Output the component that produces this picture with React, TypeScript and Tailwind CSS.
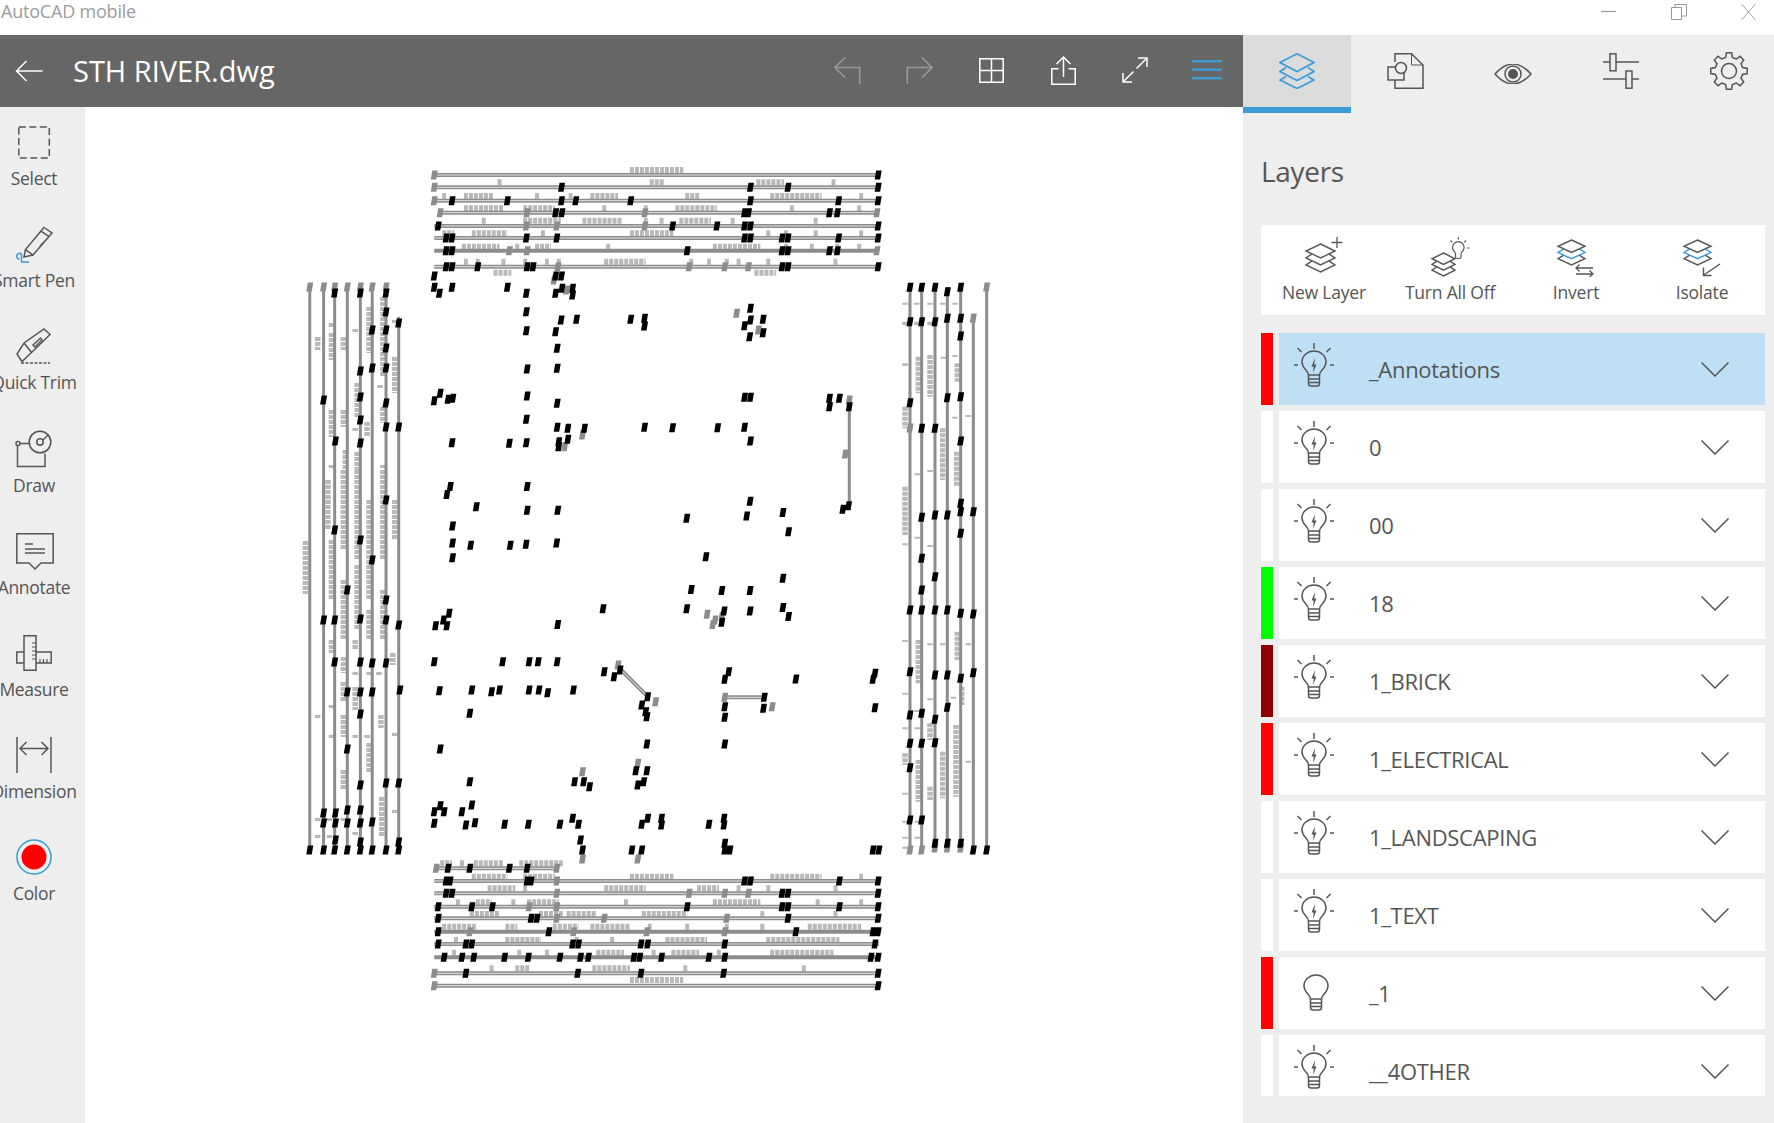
import type { ReactNode } from "react";

const INK = "#555555";
const BLUE = "#3a9bd5";

type Pt = [number, number];
type Seg = [number, number, number];

// --- drawing data, read off the plan in zoomed pixels ---
const zx = (px: number) => 290 + px / 2.53;
const ry = (x: number) => 880 + x / 3;

const topLines = [75, 112, 152, 188, 228, 264, 302, 350];
const bottomLines = [723, 760, 800, 835, 875, 912, 952, 1000, 1037];

const topBlack: Pt[] = [
  [1488, 75], [687, 112], [1165, 112], [1260, 112], [1488, 112],
  [410, 152], [550, 152], [687, 152], [723, 152], [862, 152], [1165, 152], [1388, 152], [1488, 152],
  [672, 188], [688, 188], [1150, 188], [1160, 188], [1365, 188], [1385, 188],
  [375, 228], [968, 228], [1080, 228], [1150, 228], [1165, 228], [1488, 228],
  [395, 264], [410, 264], [598, 264], [675, 264], [1150, 264], [1165, 264], [1245, 264], [1260, 264], [1388, 264], [1488, 264],
  [395, 302], [410, 302], [1005, 302], [1245, 302], [1260, 302], [1365, 302], [1385, 302],
  [395, 350], [410, 350], [475, 350], [600, 350], [615, 350], [1245, 350], [1260, 350], [1488, 350],
  [365, 378], [687, 378], [672, 378], [365, 412], [378, 430], [410, 412], [550, 412], [598, 430], [672, 430], [688, 415], [715, 415], [715, 435],
  [598, 485], [598, 542], [686, 510], [672, 545], [725, 508], [862, 508], [897, 505], [897, 528], [1165, 475], [1165, 510], [1150, 527], [1197, 508], [1197, 548], [1163, 560],
  [676, 595], [600, 657], [676, 655], [380, 730], [365, 752], [400, 748], [412, 745], [600, 738], [676, 760], [1150, 742], [1165, 742], [1365, 745], [1390, 745], [1365, 770], [1415, 770],
  [598, 808], [676, 832], [703, 835], [745, 835], [897, 832], [968, 833], [1082, 833], [1150, 832], [410, 878], [555, 880], [598, 878], [680, 875], [703, 868], [680, 890], [1165, 873],
];
const topGray: Pt[] = [
  [365, 75], [365, 112], [365, 152], [380, 188], [600, 188], [898, 188], [1485, 188],
  [598, 228], [675, 228], [898, 228], [555, 302], [600, 302], [1485, 302], [678, 350], [1010, 350], [1100, 350], [1160, 350],
  [668, 390], [700, 420], [1130, 490], [1185, 540], [1415, 750], [740, 855], [695, 890], [1405, 912],
];
const topText: Seg[] = [
  [860, 995, 60], [525, 535, 97], [910, 948, 97], [1180, 1250, 97], [1370, 1380, 97],
  [385, 395, 138], [440, 515, 138], [620, 630, 138], [705, 715, 138], [760, 830, 138], [1000, 1035, 138], [1215, 1345, 138], [1440, 1450, 138],
  [440, 540, 175], [590, 670, 175], [790, 800, 175], [895, 905, 175], [975, 1080, 175], [1265, 1275, 175], [1435, 1445, 175],
  [485, 495, 212], [590, 685, 212], [740, 840, 212], [895, 905, 212], [935, 945, 212], [985, 1065, 212], [1115, 1125, 212], [1325, 1335, 212],
  [385, 415, 250], [460, 550, 250], [635, 645, 250], [860, 970, 250], [1205, 1215, 250], [1250, 1260, 250], [1325, 1335, 250], [1440, 1450, 250],
  [435, 530, 290], [570, 580, 290], [620, 660, 290], [800, 810, 290], [1070, 1190, 290], [1250, 1260, 290], [1315, 1325, 290], [1380, 1390, 290], [1435, 1445, 290],
  [440, 450, 335], [470, 480, 335], [535, 545, 335], [590, 600, 335], [645, 655, 335], [675, 685, 335], [795, 900, 335], [1010, 1020, 335], [1055, 1065, 335], [1100, 1110, 335], [1130, 1140, 335], [1205, 1215, 335], [1375, 1385, 335],
  [515, 560, 368], [1175, 1230, 368],
];

const botBlack: Pt[] = [
  [400, 685], [455, 685], [555, 685], [600, 685],
  [395, 723], [405, 723], [600, 723], [610, 723], [1150, 723], [1165, 723], [1390, 723], [1488, 723],
  [395, 760], [410, 760], [1245, 760], [1260, 760], [1488, 760],
  [375, 800], [460, 800], [512, 800], [1005, 800], [1245, 800], [1260, 800], [1390, 800], [1488, 800],
  [375, 835], [610, 835], [625, 835], [1260, 835], [1488, 835],
  [375, 875], [655, 875], [1280, 875], [1475, 875], [1488, 875],
  [375, 912], [445, 912], [460, 912], [715, 912], [730, 912], [888, 912], [905, 912], [1100, 912], [1480, 912],
  [390, 952], [435, 952], [465, 952], [543, 952], [603, 952], [683, 952], [735, 952], [755, 952], [870, 952], [885, 952], [940, 952], [1060, 952], [1100, 952], [1470, 952], [1488, 952],
  [445, 1000], [728, 1000], [888, 1000], [1097, 1000], [1488, 1000], [1488, 1037],
  [365, 65], [538, 65], [605, 65], [628, 65], [676, 65], [795, 95], [820, 110], [835, 90], [378, 152], [460, 150], [510, 155], [530, 150], [605, 150], [630, 150], [652, 158], [717, 150],
  [905, 170], [890, 195], [900, 215], [903, 230], [1110, 95], [1100, 118], [1280, 117], [1480, 100], [1475, 118], [1200, 172], [1198, 205], [1100, 200], [1100, 232], [1480, 203],
  [455, 220], [380, 327], [903, 312], [1100, 312], [455, 425], [720, 425], [743, 425], [758, 440], [875, 392], [903, 392], [880, 435], [895, 425],
  [365, 515], [380, 497], [390, 515], [435, 515], [460, 495], [365, 550], [445, 555], [468, 548], [543, 553], [603, 553], [683, 553], [715, 535], [730, 553], [890, 553], [905, 535], [940, 535], [940, 555], [1060, 553], [1098, 535], [1098, 555],
  [1100, 610], [1100, 630], [1113, 630], [1475, 630], [1490, 630], [735, 600], [740, 630], [865, 630], [890, 630],
];
const botGray: Pt[] = [
  [370, 685], [675, 685], [675, 723], [675, 760], [1010, 760], [1100, 760], [1160, 760], [605, 800], [675, 800], [675, 835], [795, 835], [1105, 835],
  [455, 875], [718, 875], [903, 875], [1100, 875], [365, 1000], [365, 1037],
  [740, 657], [880, 657], [830, 75], [925, 185], [1220, 200], [1100, 172], [880, 370], [740, 395],
];
const botText: Seg[] = [
  [380, 410, 670], [430, 440, 670], [465, 540, 670], [580, 690, 670],
  [460, 550, 710], [590, 670, 710], [860, 970, 710], [1215, 1345, 710], [1440, 1450, 710],
  [500, 570, 745], [590, 600, 745], [795, 900, 745], [1030, 1085, 745], [1130, 1140, 745], [1205, 1215, 745], [1375, 1385, 745],
  [420, 430, 787], [470, 510, 787], [560, 570, 787], [600, 680, 787], [845, 855, 787], [1070, 1190, 787], [1330, 1340, 787], [1440, 1450, 787],
  [455, 530, 822], [630, 690, 822], [700, 775, 822], [890, 1005, 822], [1190, 1200, 822], [1375, 1385, 822],
  [385, 470, 860], [545, 575, 860], [665, 730, 860], [760, 860, 860], [905, 915, 860], [1000, 1010, 860], [1100, 1110, 860], [1190, 1200, 860], [1310, 1445, 860],
  [415, 425, 900], [545, 635, 900], [720, 730, 900], [810, 820, 900], [950, 1055, 900], [1205, 1390, 900],
  [410, 420, 938], [575, 585, 938], [645, 655, 938], [775, 845, 938], [915, 925, 938], [965, 1035, 938], [1080, 1090, 938], [1215, 1375, 938],
  [505, 515, 985], [570, 605, 985], [765, 860, 985], [995, 1005, 985], [1295, 1305, 985], [860, 995, 1020],
];

// middle of the plan, read off the full screenshot (displayed px)
const midBlack: Pt[] = [
  [398, 430], [395, 437], [466, 430], [421, 448], [466, 451], [400, 465], [400, 480], [416, 482], [400, 493], [451, 482], [465, 481], [492, 480], [493, 451],
  [607, 458], [663, 443], [660, 456], [692, 453], [697, 470], [745, 450], [750, 447], [624, 492], [692, 511], [611, 521], [638, 522], [663, 522],
  [607, 538], [640, 540], [663, 540], [692, 537], [697, 545], [533, 538], [397, 542], [392, 548], [385, 553], [395, 553], [493, 552], [638, 550],
];
const midGray: Pt[] = [[625, 543], [632, 548], [638, 545], [630, 552]];
const disp = (n: number) => n * 1.1314;

const leftLines = [50, 85, 113, 145, 178, 208, 243, 275];
// left block: y in real pixels
const leftBlack: Pt[] = [
  [113, 293], [178, 293], [243, 293], [243, 312], [208, 330], [275, 323], [243, 330], [243, 348], [178, 371], [208, 368], [243, 368],
  [85, 400], [178, 397], [243, 403], [178, 420], [243, 427], [275, 427], [115, 441], [178, 443],
  [85, 620], [113, 620], [178, 619], [243, 600], [243, 620], [275, 625], [113, 530], [178, 540], [243, 500], [208, 560], [145, 590],
  [113, 662], [178, 662], [208, 663], [243, 663], [145, 692], [178, 692], [208, 692], [278, 690], [178, 714], [145, 749], [178, 785], [243, 783], [275, 783],
  [85, 813], [115, 813], [145, 810], [178, 810], [85, 823], [115, 823], [145, 823], [178, 823], [208, 822], [115, 840], [178, 842], [275, 842],
  [50, 850], [85, 850], [113, 850], [145, 850], [178, 850], [208, 850], [243, 850], [275, 850],
];
const leftText: Seg[] = [
  [70, 337, 350], [105, 323, 328], [105, 333, 360], [135, 337, 350], [165, 329, 332], [200, 307, 353], [235, 297, 377], [265, 320, 323], [265, 357, 393], [228, 385, 388],
  [105, 410, 437], [135, 410, 427], [170, 383, 417], [195, 422, 437], [235, 407, 423], [165, 428, 431], [235, 465, 468], [105, 465, 468], [140, 450, 470], [170, 452, 470],
  [39, 541, 594], [96, 480, 530], [105, 540, 600], [135, 470, 550], [170, 470, 560], [170, 565, 630], [200, 500, 600], [235, 470, 560], [265, 500, 540], [135, 580, 640], [235, 590, 640], [200, 610, 640],
  [105, 640, 653], [135, 657, 673], [165, 640, 650], [260, 653, 665], [165, 672, 675], [200, 672, 675], [225, 672, 675], [135, 682, 702], [165, 687, 710], [70, 715, 718],
  [105, 705, 708], [135, 715, 737], [230, 715, 728], [105, 735, 738], [165, 735, 738], [195, 735, 738], [265, 733, 736], [200, 743, 773], [135, 770, 790], [232, 797, 837],
  [70, 818, 821], [100, 818, 821], [135, 818, 821], [265, 810, 813], [70, 835, 838], [100, 835, 838], [165, 832, 835],
];

const rightLines = [90, 125, 165, 202, 242, 280, 320];
const r9 = (y: number) => 260 + y / 3;
const r10 = (y: number) => 610 + y / 3;
const rightBlack: Pt[] = [
  ...([[90, 82], [125, 82], [165, 82], [202, 95], [242, 82], [90, 185], [125, 185], [165, 185], [202, 175], [242, 175], [242, 228], [202, 413], [242, 410], [90, 428], [125, 505], [165, 505], [242, 543], [125, 772], [165, 765], [202, 765], [242, 730], [242, 755], [280, 755], [242, 820], [125, 895], [165, 950], [125, 990], [90, 1050], [125, 1050], [165, 1050], [202, 1050]] as Pt[]).map(([x, y]): Pt => [x, r9(y)]),
  ...([[242, 10], [280, 12], [90, 185], [280, 188], [165, 195], [202, 195], [242, 205], [202, 292], [90, 315], [125, 310], [165, 328], [90, 400], [125, 400], [165, 398], [90, 473], [90, 630], [125, 630], [165, 700], [202, 700], [242, 700], [280, 720], [320, 720]] as Pt[]).map(([x, y]): Pt => [x, r10(y)]),
];
const rightGray: Pt[] = [[320, 287], [280, 318], [90, 428], [90, 850], [125, 850], [165, 848], [202, 848], [242, 848]];
const rightText: Seg[] = [
  ...([[75, 128, 134], [110, 128, 134], [150, 128, 134], [188, 128, 134], [225, 128, 134], [75, 185, 195], [110, 185, 195], [150, 185, 195], [75, 310, 318], [115, 290, 400], [150, 285, 410], [190, 290, 296], [225, 285, 291], [232, 310, 365], [75, 440, 505], [225, 470, 476], [265, 465, 471], [188, 505, 660], [230, 575, 680], [112, 640, 646], [150, 630, 636], [75, 680, 825], [112, 830, 836], [150, 855, 861], [75, 850, 856]] as Seg[]).map(([x, a, b]): Seg => [x, r9(a), r9(b)]),
  ...([[75, 90, 96], [115, 90, 220], [150, 100, 106], [188, 100, 106], [232, 65, 150], [265, 100, 106], [75, 248, 254], [150, 265, 271], [220, 260, 266], [245, 230, 285], [112, 300, 306], [75, 352, 358], [112, 352, 358], [150, 340, 390], [75, 430, 465], [228, 345, 560], [188, 425, 565], [115, 450, 575], [265, 452, 458], [150, 530, 570], [75, 548, 554], [75, 632, 638], [112, 632, 638], [75, 680, 686], [112, 680, 686], [75, 710, 716]] as Seg[]).map(([x, a, b]): Seg => [x, r10(a), r10(b)]),
];

const blob = (x: number, y: number) => `M${x - 3.5} ${y + 4.5}l1.500-9h5.500l-1.500 9z`;
const blobs = (pts: Pt[], mapX: (n: number) => number, mapY: (n: number) => number) =>
  pts.map(([x, y]) => blob(mapX(x), mapY(y))).join("");
const y6 = (n: number) => 150 + n / 3;
const y7 = (n: number) => 640 + n / 3;
const same = (n: number) => n;

const hText = (segs: Seg[], mapY: (n: number) => number) =>
  segs.map(([a, b, y]) => `M${zx(a)} ${mapY(y)}H${zx(b)}`).join("");

const DoubleLine = ({ d, thick }: { d: string; thick?: boolean }) => (
  <>
    <path d={d} stroke="#8c8c8c" strokeWidth={4} />
    {!thick && <path d={d} stroke="#e2e2e2" strokeWidth={1} />}
  </>
);

const Plan = () => (
  <svg viewBox="85 107 1158 1016" className="block w-full h-full blur-[0.6px]" fill="none">
    {/* horizontal bands */}
    <path d={hText(topText, y6)} stroke="#b8b8b8" strokeWidth={6} strokeDasharray="4 1" />
    <path d={hText(botText, y7)} stroke="#b8b8b8" strokeWidth={6} strokeDasharray="4 1" />
    {topLines.map((y) => (
      <DoubleLine key={y} d={`M${zx(y === 188 ? 380 : 365)} ${y6(y)}H${zx(1490)}`} thick={y === 302} />
    ))}
    {bottomLines.map((y) => (
      <DoubleLine key={y} d={`M${zx(365)} ${y7(y)}H${zx(1490)}`} thick={y === 875 || y === 952} />
    ))}
    <DoubleLine d={`M${zx(365)} ${y7(685)}H${zx(680)}`} />
    <DoubleLine d={`M${zx(838)} ${y7(90)}L${zx(905)} ${y7(170)}`} />
    <DoubleLine d={`M${zx(1100)} ${y7(172)}H${zx(1195)}`} />
    <path d={`M${zx(1415)} 400V510`} stroke="#8c8c8c" strokeWidth={3} />

    {/* left column of verticals */}
    <path d={leftText.map(([x, a, b]) => `M${zx(x)} ${a}V${b}`).join("")} stroke="#b8b8b8" strokeWidth={5.500} strokeDasharray="4 1" />
    {leftLines.map((x, i) => (
      <path key={x} d={`M${zx(x)} ${i === 7 ? 317 : 287}V850`} stroke="#8c8c8c" strokeWidth={3} />
    ))}
    <path d={blobs(leftLines.slice(0, 7).map((x): Pt => [x, 287]), zx, same)} fill="#8c8c8c" />
    <path d={blobs(leftBlack, zx, same)} fill="#000" />

    {/* right column of verticals */}
    <path d={rightText.map(([x, a, b]) => `M${ry(x)} ${a}V${b}`).join("")} stroke="#b8b8b8" strokeWidth={5.500} strokeDasharray="4 1" />
    {rightLines.map((x, i) => (
      <path key={x} d={`M${ry(x)} ${i === 5 ? 318 : 287}V850`} stroke="#8c8c8c" strokeWidth={3} />
    ))}
    <path d={blobs(rightGray, ry, same)} fill="#8c8c8c" />
    <path d={blobs(rightBlack, ry, same)} fill="#000" />

    {/* blobs over the bands */}
    <path d={blobs(topGray, zx, y6)} fill="#8c8c8c" />
    <path d={blobs(botGray, zx, y7)} fill="#8c8c8c" />
    <path d={blobs(midGray, disp, disp)} fill="#8c8c8c" />
    <path d={blobs(topBlack, zx, y6)} fill="#000" />
    <path d={blobs(botBlack, zx, y7)} fill="#000" />
    <path d={blobs(midBlack, disp, disp)} fill="#000" />
  </svg>
);

// --- icons ---
const Stack = ({ x, y, w, h, mid = INK }: { x: number; y: number; w: number; h: number; mid?: string }) => {
  const c = x + w / 2;
  const step = (h - (h * 0.5)) / 2;
  const half = h * 0.25;
  const chev = (top: number) => `M${x + w * 0.2} ${top - half * 0.55}L${x} ${top}L${c} ${top + half}L${x + w} ${top}L${x + w * 0.8} ${top - half * 0.55}`;
  return (
    <g fill="none" strokeWidth={1.4}>
      <path d={`M${c} ${y}L${x + w} ${y + half}L${c} ${y + half * 2}L${x} ${y + half}Z`} stroke={INK} />
      <path d={chev(y + half + step)} stroke={mid} />
      <path d={chev(y + half + step * 2)} stroke={INK} />
    </g>
  );
};

const Bulb = ({ off }: { off?: boolean }) => (
  <svg width={40} height={44} viewBox="0 0 40 44" fill="none" stroke={INK} strokeWidth={1.5}>
    <g transform={off ? "translate(2 0)" : undefined}>
      <path d="M14.5 32c0-5-6.5-6-6.5-13a12 11 0 0 1 24 0c0 7-6.500 8-6.500 13z" />
      <path d="M14.500 32v8.500q0 2.500 2.500 2.500h6q2.500 0 2.500-2.500V32M14.500 36h11M14.500 39.500h11" />
    </g>
    {!off && (
      <>
        <path d="M20 0v6M3.500 5l4 4M36.500 5l-4 4M0 22h4M36 22h4" />
        <path d="M21 15L17.500 23.500h2.200L19 30l3.500-8.500h-2.200z" fill={INK} stroke="none" />
      </>
    )}
  </svg>
);

const gearPath = (() => {
  const pts: string[] = [];
  const teeth = 8;
  for (let i = 0; i < teeth; i++) {
    const a = (i / teeth) * Math.PI * 2 - Math.PI / 2;
    const w = Math.PI / teeth;
    const at = (r: number, t: number) => `${(19 + r * Math.cos(t)).toFixed(1)} ${(19 + r * Math.sin(t)).toFixed(1)}`;
    pts.push(at(14, a - w * 0.62), at(18.4, a - w * 0.36), at(18.4, a + w * 0.36), at(14, a + w * 0.62));
  }
  return `M${pts.join("L")}Z`;
})();

const tabIcons: ReactNode[] = [
  <svg key="layers" width={36} height={36} viewBox="0 0 36 36" fill="none" stroke={BLUE} strokeWidth={1.6}>
    <path d="M18 .8L35 9.500L18 18.500L1 9.500Z" />
    <path d="M7 14.500L1 18.500L18 27.500L35 18.500L29 14.500" />
    <path d="M7 23.500L1 27L18 35.500L35 27L29 23.500" />
  </svg>,
  <svg key="doc" width={37} height={36} viewBox="0 0 37 36" fill="none" stroke={INK} strokeWidth={1.5}>
    <path d="M8 9V.8H24.500L36 12V35.200H8V27" />
    <path d="M24.500 1V12H36" strokeWidth={1} />
    <path d="M8.500 14H1V27H17V20" />
    <circle cx={14} cy={15} r={5.500} />
  </svg>,
  <svg key="eye" width={38} height={20} viewBox="0 0 38 20" fill="none" stroke={INK} strokeWidth={1.5} className="mt-[6px]">
    <path d="M1 10Q19-10 37 10Q19 30 1 10Z" />
    <circle cx={19} cy={10} r={8} />
    <circle cx={19} cy={10} r={5} fill={INK} stroke="none" />
  </svg>,
  <svg key="sliders" width={36} height={36} viewBox="0 0 36 36" fill="none" stroke={INK} strokeWidth={1.5}>
    <path d="M0 9H7M13 9H36M0 26H23M29 26H36" />
    <rect x={7} y={.8} width={6} height={17} />
    <rect x={23} y={18} width={6} height={17.200} />
  </svg>,
  <svg key="gear" width={38} height={38} viewBox="0 0 38 38" fill="none" stroke={INK} strokeWidth={1.5}>
    <path d={gearPath} />
    <circle cx={19} cy={19} r={7.500} />
  </svg>,
];

const toolIcons: ReactNode[] = [
  <svg key="undo" width={27} height={27} viewBox="0 0 27 27" fill="none" stroke="#9a9a9a" strokeWidth={1.6}>
    <path d="M11 .5L1 10.500L11 20.500M1 10.500H25.700V27" />
  </svg>,
  <svg key="redo" width={27} height={27} viewBox="0 0 27 27" fill="none" stroke="#9a9a9a" strokeWidth={1.6}>
    <path d="M16 .5L26 10.500L16 20.500M26 10.500H1.300V27" />
  </svg>,
  <svg key="grid" width={25} height={25} viewBox="0 0 25 25" fill="none" stroke="#fff" strokeWidth={1.5}>
    <path d="M.8.8H24.200V24.200H.8ZM12.500.8V24.200M.8 12.500H24.200" />
  </svg>,
  <svg key="share" width={25} height={29} viewBox="0 0 25 29" fill="none" stroke="#fff" strokeWidth={1.5}>
    <path d="M7.500 12.800H.8V28.200H24.200V12.800H17.500M12.500 21V1M5.500 8L12.500 1L19.500 8" />
  </svg>,
  <svg key="expand" width={26} height={26} viewBox="0 0 26 26" fill="none" stroke="#fff" strokeWidth={1.5}>
    <path d="M14.500 11.500L25 1M16 1H25V10M11.500 14.500L1 25M1 16V25H10" />
  </svg>,
  <svg key="menu" width={30} height={20} viewBox="0 0 30 20" fill={BLUE}>
    <rect y={0} width={30} height={2.400} />
    <rect y={8.500} width={30} height={2.400} />
    <rect y={17} width={30} height={2.400} />
  </svg>,
];

const sideTools: { label: string; icon: ReactNode }[] = [
  {
    label: "Select",
    icon: <rect x={2.800} y={3} width={30.500} height={31} strokeDasharray="7 3.500" />,
  },
  {
    label: "Smart Pen",
    icon: (
      <>
        <path d="M28 1.500L36 7L33 10.500L25 5ZM25 5L9.500 23.500L17 29L33 10.500M9.500 23.500L8 31L17 29M29 15L24 20" />
        <path d="M3.500 33a2.800 2.800 0 1 1 2.500-4M5.500 28.500V36H13" stroke={BLUE} />
      </>
    ),
  },
  {
    label: "Quick Trim",
    icon: (
      <>
        <path d="M28 1L34 6.500L15.500 24.500L6 33.500L1 26L8 15ZM8 15L15.500 24.500" />
        <path d="M17 17L24.500 10L26 12L19 19Z" />
        <path d="M5 35H34" strokeDasharray="3 1.500" />
      </>
    ),
  },
  {
    label: "Draw",
    icon: (
      <>
        <path d="M1.500 15V35.500H29V22.500M4 12.500H13" />
        <circle cx={2} cy={12.500} r={2} />
        <circle cx={24} cy={11} r={10.800} />
        <circle cx={24} cy={11} r={3.200} />
        <path d="M27 9L32 4" />
      </>
    ),
  },
  {
    label: "Annotate",
    icon: (
      <>
        <path d="M.8.8H37.200V30H25L19 36L13 30H.8Z" />
        <path d="M9 11H17M9 16H29M9 20H29" />
      </>
    ),
  },
  {
    label: "Measure",
    icon: (
      <>
        <path d="M8 .8H20V35.200H8ZM8 17H.8V28H8M20 17H35.200V28H20" />
        <path d="M16 8H20M16 12H20M16 16H20M16 20H20M16 24H20M24 24V28M27.500 24V28M31 24V28" strokeWidth={1.2} />
      </>
    ),
  },
  {
    label: "Dimension",
    icon: <path d="M1 0V36M35 0V36M4 11.500H32M10.500 5L4 11.500L10.500 18M25.500 5L32 11.500L25.500 18" />,
  },
  {
    label: "Color",
    icon: (
      <>
        <circle cx={18} cy={18} r={17} stroke={BLUE} />
        <circle cx={18} cy={18} r={12.500} fill="#ff0000" stroke="none" />
      </>
    ),
  },
];

const actions: { label: string; icon: ReactNode }[] = [
  {
    label: "New Layer",
    icon: (
      <>
        <Stack x={4} y={7} w={29} h={28} />
        <path d="M35 0V11M29.500 5.500H40.500" stroke={INK} strokeWidth={1.3} />
      </>
    ),
  },
  {
    label: "Turn All Off",
    icon: (
      <>
        <Stack x={4} y={16} w={23} h={23} />
        <g fill="none" stroke={INK} strokeWidth={1.2}>
          <path d="M27.500 17c0-2.500-3-3-3-6.500a5.800 5.800 0 0 1 11.600 0c0 3.500-3 4-3 6.500v3q0 1.500-1.500 1.500h-2.600q-1.500 0-1.500-1.500z" />
          <path d="M30.300 0V2.500M22.500 3.500L24.300 5.300M38 3.500L36.200 5.300M39 11H41.500" />
        </g>
      </>
    ),
  },
  {
    label: "Invert",
    icon: (
      <>
        <Stack x={4} y={3} w={27} h={25} mid={BLUE} />
        <path d="M22 31H39M25.500 27.500L22 31L25.500 34.500M22 37H39M35.500 33.500L39 37L35.500 40" fill="none" stroke={INK} strokeWidth={1.3} />
      </>
    ),
  },
  {
    label: "Isolate",
    icon: (
      <>
        <Stack x={4} y={3} w={27} h={25} mid={BLUE} />
        <path d="M40 27L23 38.500M23.500 30.500V38.500H31.500" fill="none" stroke={INK} strokeWidth={1.4} />
      </>
    ),
  },
];

const layers = [
  { name: "_Annotations", color: "bg-[#ff0000]", active: true },
  { name: "0" },
  { name: "00" },
  { name: "18", color: "bg-[#00ff00]" },
  { name: "1_BRICK", color: "bg-[#8f0000]" },
  { name: "1_ELECTRICAL", color: "bg-[#ff0000]" },
  { name: "1_LANDSCAPING" },
  { name: "1_TEXT" },
  { name: "_1", color: "bg-[#ff0000]", off: true },
  { name: "__4OTHER" },
];

export default function App() {
  return (
    <div className="w-[1774px] h-[1123px] flex flex-col overflow-hidden bg-white font-['Open_Sans',sans-serif] text-[#555555]">
      {/* window title bar */}
      <div className="h-[35px] shrink-0 flex items-start">
        <div className="pl-[1px] text-[18px] leading-[23px] text-[#9c9c9c] tracking-[-0.2px]">AutoCAD mobile</div>
        <div className="ml-auto flex items-start pt-[4px] pr-[18px]">
          <svg width={16} height={16} viewBox="0 0 16 16" stroke="#9a9a9a" fill="none" className="mr-[54px]">
            <path d="M0 7.500H15" strokeWidth={1.200} />
          </svg>
          <svg width={16} height={16} viewBox="0 0 16 16" stroke="#9a9a9a" fill="none" className="mr-[54px]">
            <path d="M.5 3.500H10.500V15.500H.5ZM4 3.500V.5H15.500V12H10.500" strokeWidth={1} />
          </svg>
          <svg width={15} height={16} viewBox="0 0 15 16" stroke="#8a8a8a" fill="none">
            <path d="M.5 0L14.500 16M14.500 0L.5 16" strokeWidth={.8} />
          </svg>
        </div>
      </div>

      <div className="flex-1 flex min-h-0">
        <div className="w-[1243px] flex flex-col">
          {/* toolbar */}
          <div className="h-[72px] shrink-0 bg-[#666666] flex items-center text-white">
            <svg width={28} height={22} viewBox="0 0 28 22" fill="none" stroke="#fff" strokeWidth={1.5} className="ml-[15px]">
              <path d="M27.500 11H1.500M11.500 1L1.500 11L11.500 21" />
            </svg>
            <div className="ml-[30px] text-[29px] leading-[40px] -mt-[1px]">STH RIVER.dwg</div>
            <div className="ml-auto flex">
              {toolIcons.map((icon, i) => (
                <div key={i} className="w-[72px] h-[72px] flex items-center justify-center -mt-[2px]">
                  {icon}
                </div>
              ))}
            </div>
          </div>

          <div className="flex-1 flex min-h-0">
            {/* tools sidebar */}
            <div className="w-[85px] shrink-0 bg-[#eeeeee] overflow-hidden pt-[17px]">
              {sideTools.map((tool) => (
                <div key={tool.label} className="w-[68px] h-[102.2px] flex flex-col items-center">
                  <svg width={36} height={36} viewBox="0 0 36 36" fill="none" stroke={INK} strokeWidth={1.5} className="shrink-0 overflow-visible">
                    {tool.icon}
                  </svg>
                  <div className="mt-[5px] text-[17.500px] leading-[26px] whitespace-nowrap tracking-[-0.3px]">{tool.label}</div>
                </div>
              ))}
            </div>
            <div className="flex-1 min-w-0">
              <Plan />
            </div>
          </div>
        </div>

        {/* right panel */}
        <div className="flex-1 bg-[#eeeeee] flex flex-col min-w-0">
          <div className="flex h-[78px] shrink-0 overflow-hidden">
            {tabIcons.map((icon, i) => (
              <div
                key={i}
                className={
                  i === 0
                    ? "w-[108px] shrink-0 h-full flex items-center justify-center bg-[#dcdcdc] border-b-[6px] border-[#3a9bd5]"
                    : "w-[108px] shrink-0 h-full pb-[6px] flex items-center justify-center"
                }
              >
                {icon}
              </div>
            ))}
          </div>

          <div className="pl-[18px] pr-[9px]">
            <h1 className="mt-[38px] mb-[34px] text-[28px] leading-[40px] font-normal tracking-[-0.3px]">Layers</h1>

            <div className="h-[90px] bg-white grid grid-cols-4 pt-[12px] mb-[18px]">
              {actions.map((action) => (
                <div key={action.label} className="flex flex-col items-center">
                  <svg width={44} height={40} viewBox="0 0 44 40" fill="none" className="shrink-0">
                    {action.icon}
                  </svg>
                  <div className="mt-[2px] text-[17.500px] leading-[26px] whitespace-nowrap tracking-[-0.2px]">{action.label}</div>
                </div>
              ))}
            </div>

            <div className="h-[763px] overflow-hidden flex flex-col gap-[6px]">
              {layers.map((layer) => (
                <div key={layer.name} className="h-[72px] shrink-0 flex gap-[6px]">
                  <div className={`w-[12px] ${layer.color ?? "bg-white"}`} />
                  <div className={`flex-1 flex items-center pl-[15px] pr-[36px] ${layer.active ? "bg-[#bfdff5]" : "bg-white"}`}>
                    <div className="mb-[8px]">
                      <Bulb off={layer.off} />
                    </div>
                    <div className="ml-[35px] text-[22px] leading-[30px] tracking-[-0.3px]">{layer.name}</div>
                    <svg width={28} height={15} viewBox="0 0 28 15" fill="none" stroke={INK} strokeWidth={1.5} className="ml-auto">
                      <path d="M.5 .5L14 14L27.500 .5" />
                    </svg>
                  </div>
                </div>
              ))}
            </div>
          </div>
        </div>
      </div>
    </div>
  );
}
